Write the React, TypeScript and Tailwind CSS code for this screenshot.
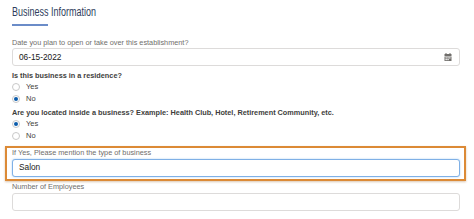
import React from "react";

interface RadioProps {
  label: string;
  checked?: boolean;
}

const Radio: React.FC<RadioProps> = ({ label, checked }) => (
  <div className="flex h-[12px] items-center">
    <span
      className={
        checked
          ? "flex h-[8px] w-[8px] items-center justify-center rounded-full border border-[#c9c9c9] bg-white"
          : "h-[8px] w-[8px] rounded-full border border-[#c9c9c9] bg-white"
      }
    >
      {checked && <span className="h-[4px] w-[4px] rounded-full bg-[#0b5cab]" />}
    </span>
    <span className="ml-[6px] text-[7.5px] leading-[10px] text-[#3e3e3c]">{label}</span>
  </div>
);

const CalendarIcon = () => (
  <svg width="8" height="8" viewBox="0 0 8 8" className="text-[#706e6b]">
    <rect x="1.5" y="0" width="1" height="1.5" fill="currentColor" />
    <rect x="5.5" y="0" width="1" height="1.5" fill="currentColor" />
    <rect x="0.5" y="1" width="7" height="2" fill="currentColor" />
    <rect x="0.5" y="3.5" width="7" height="4.5" fill="currentColor" />
    <rect x="1.5" y="4.3" width="1.3" height="1.2" fill="#fff" />
    <rect x="3.4" y="4.3" width="1.3" height="1.2" fill="#fff" />
    <rect x="5.2" y="4.3" width="1.3" height="1.2" fill="#fff" />
    <rect x="1.5" y="6" width="1.3" height="1.2" fill="#fff" />
    <rect x="3.4" y="6" width="1.3" height="1.2" fill="#fff" />
  </svg>
);

const Label: React.FC<{ children: React.ReactNode; bold?: boolean; className?: string }> = ({
  children,
  bold,
  className = "",
}) => (
  <div
    className={`text-[7.3px] leading-[10px] ${
      bold ? "font-bold text-[#3e3e3c]" : "text-[#706e6b]"
    } ${className}`}
  >
    {children}
  </div>
);

export default function App() {
  return (
    <div
      className="h-[219px] w-[474px] overflow-hidden bg-white px-[12px]"
      style={{ fontFamily: '"Liberation Sans", Arial, sans-serif' }}
    >
      <div className="w-[448px]">
        <h2 className="mt-[4px] origin-left scale-x-[0.72] whitespace-nowrap text-[12.5px] leading-[16px] text-[#2e3d5c]">
          Business Information
        </h2>
        <div className="mt-[4px] h-[2px] w-[36px] bg-[#6b8cc8]" />

        <Label className="mt-[11.5px]">
          Date you plan to open or take over this establishment?
        </Label>
        <div className="mt-[0.5px] flex h-[18px] items-center justify-between rounded-[3px] border border-[#dddbda] bg-white pl-[6px] pr-[7px]">
          <span className="text-[8.3px] text-[#181818]">06-15-2022</span>
          <CalendarIcon />
        </div>

        <Label bold className="mt-[5px]">
          Is this business in a residence?
        </Label>
        <Radio label="Yes" />
        <Radio label="No" checked />

        <Label bold className="mt-[3px]">
          Are you located inside a business? Example: Health Club, Hotel, Retirement
          Community, etc.
        </Label>
        <Radio label="Yes" checked />
        <Radio label="No" />

        <div className="ml-[-7px] mr-[-6px] mt-[3.5px] border-2 border-[#dc8a36] pb-[2.5px] pl-[5px] pr-[4px] shadow-[0_1px_2px_rgba(150,90,30,0.35)]">
          <Label>If Yes, Please mention the type of business</Label>
          <div className="mt-[1px] flex h-[18px] items-center rounded-[3px] border border-[#7fb0e6] bg-white pl-[6px] shadow-[0_0_2px_rgba(1,118,211,0.35)]">
            <span className="text-[8.3px] text-[#181818]">Salon</span>
          </div>
        </div>

        <Label className="mt-[1px]">Number of Employees</Label>
        <div className="mt-[1px] h-[18px] rounded-[3px] border border-[#dddbda] bg-white" />
      </div>
    </div>
  );
}
